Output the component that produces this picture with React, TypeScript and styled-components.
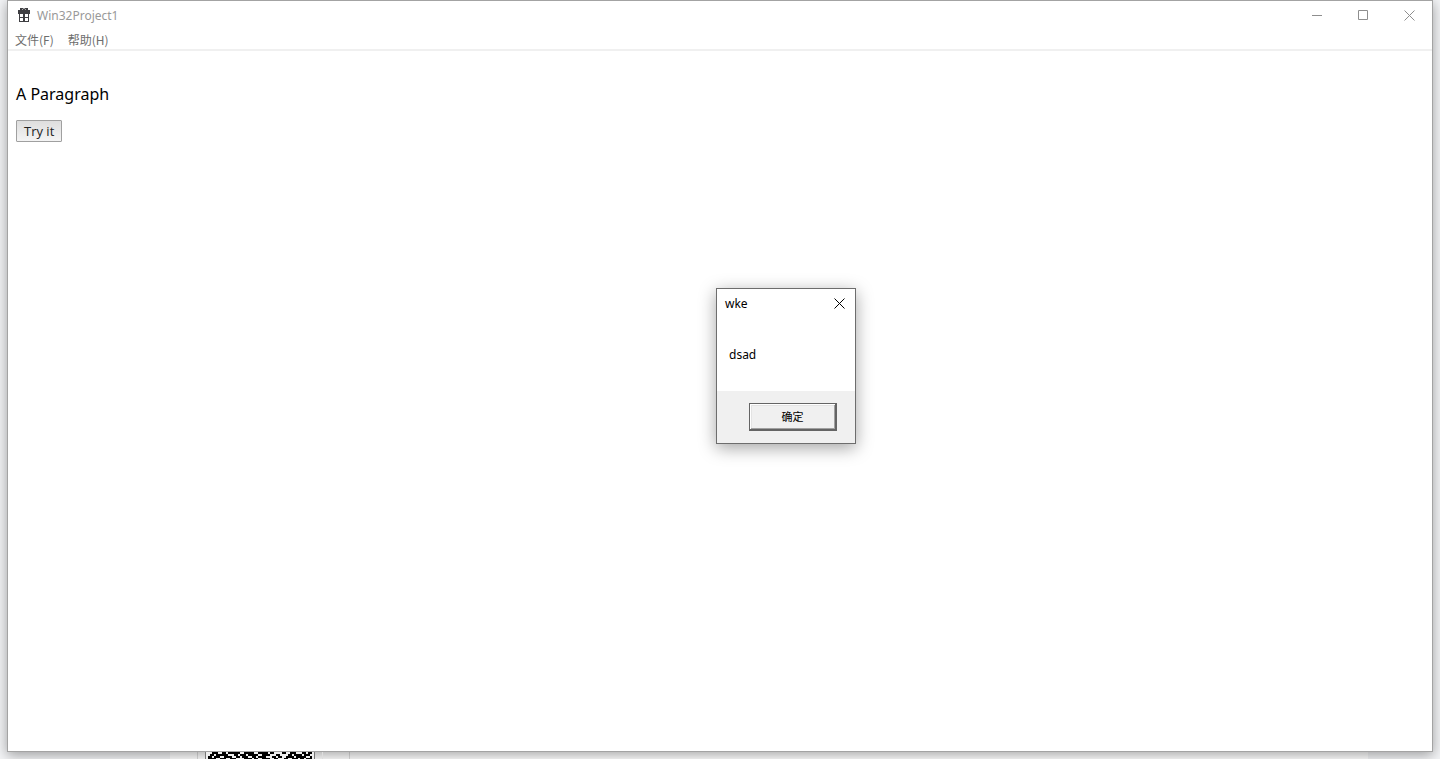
import React from 'react';
import styled, { createGlobalStyle } from 'styled-components';

const uiFont = '"Noto Sans", "Noto Sans CJK SC", sans-serif';

const GlobalStyle = createGlobalStyle`
  * { box-sizing: border-box; }
  body { margin: 0; background: #f3f4f6; font-family: ${uiFont}; }
  button { font-family: inherit; }
`;

const Desktop = styled.div`
  position: relative;
  display: flex;
  flex-direction: column;
  height: 100vh;
  overflow: hidden;
`;

const AppWindow = styled.section`
  position: relative;
  z-index: 1;
  flex: 1;
  display: flex;
  flex-direction: column;
  margin: 0 7px;
  background: #fff;
  border: 1px solid #a3a3a3;
  box-shadow: 0 3px 12px rgba(0, 0, 0, 0.36);
`;

const TitleBar = styled.header`
  display: flex;
  align-items: center;
  height: 28px;
  padding-left: 9px;
`;

const Title = styled.h1`
  flex: 1;
  margin: 0 0 0 6px;
  padding-top: 2px;
  font-size: 12px;
  font-weight: 400;
  line-height: 16px;
  color: #999;
`;

const CaptionButton = styled.button`
  display: flex;
  align-items: center;
  justify-content: center;
  width: 46px;
  height: 28px;
  padding: 0;
  border: 0;
  background: none;
  color: #8e8e8e;
`;

const MenuBar = styled.nav`
  display: flex;
  height: 22px;
  border-bottom: 2px solid #f0f0f0;
`;

const MenuButton = styled.button`
  padding: 2px 7px 0;
  border: 0;
  background: none;
  font-family: "Noto Sans CJK SC", sans-serif;
  font-size: 12px;
  line-height: 18px;
  color: #6d6d6d;
`;

const Page = styled.main`
  flex: 1;
  padding: 32px 8px;
`;

const Paragraph = styled.p`
  margin: 0 0 15px;
  font-size: 16px;
  line-height: 22px;
  color: #000;
`;

const TryButton = styled.button`
  display: block;
  height: 22px;
  padding: 0 7px;
  border: 1px solid #a0a0a0;
  border-radius: 1px;
  background: linear-gradient(#dedede, #f4f4f4);
  font-family: "Open Sans", sans-serif;
  font-size: 13px;
  line-height: 20px;
  color: #222;
`;

const Dialog = styled.div`
  position: absolute;
  z-index: 2;
  top: 288px;
  left: calc(50% - 4px);
  width: 140px;
  background: #fff;
  border: 1px solid #6d6d6d;
  box-shadow: 0 4px 16px rgba(0, 0, 0, 0.36);
  color: #000;
`;

const DialogHeader = styled.div`
  display: flex;
  align-items: center;
  justify-content: space-between;
  height: 28px;
  padding-left: 8px;
`;

const DialogTitle = styled.h2`
  margin: 0;
  padding-top: 2px;
  font-size: 12px;
  font-weight: 400;
  line-height: 16px;
`;

const DialogClose = styled.button`
  display: flex;
  align-items: center;
  justify-content: center;
  width: 31px;
  height: 28px;
  padding: 0;
  border: 0;
  background: none;
  color: #000;
`;

const Message = styled.p`
  margin: 0;
  padding: 30px 12px 28px;
  font-size: 12px;
  line-height: 16px;
`;

const DialogFooter = styled.div`
  display: flex;
  justify-content: flex-end;
  padding: 12px 18px;
  background: #f0f0f0;
`;

const OkButton = styled.button`
  width: 88px;
  height: 28px;
  padding: 0 0 2px;
  border: 1px solid #646464;
  border-right-width: 2px;
  border-bottom-width: 2px;
  background: #f0f0f0;
  box-shadow: inset 1px 1px #fff, inset -1px -1px #a0a0a0, inset 2px 2px #e3e3e3;
  font-family: "Noto Sans CJK SC", sans-serif;
  font-size: 11px;
  line-height: 16px;
  color: #000;
`;

const PageBehind = styled.div`
  flex: none;
  display: flex;
  height: 7px;
  margin: 0 72px 0 170px;
  background: #fff;
`;

const Column = styled.div<{ $width: number }>`
  width: ${(p) => p.$width}px;
  border-right: 1px solid #ddd;
`;

const CodeColumn = styled(Column)`
  position: relative;
  z-index: 2;
  padding-left: 7px;

  svg { display: block; }
`;

const codeRows = [
  '0011100110111111001111100111110110000110011100011011',
  '0110111111000110111011111001111000110000110111101110',
  '1101110011110011011100110111100011011001111011111001',
  '1111001110011100001111011001111001100011001110110111',
];

const codeCells = codeRows.flatMap((row, y) =>
  row.split('').map((cell, x) => (cell === '1' ? `M${x * 2 + 3} ${y * 2}h2v2h-2z` : '')),
).join('');

const CloseGlyph = () => (
  <svg width="11" height="11" viewBox="0 0 11 11" aria-hidden="true">
    <path d="M.5.5l10 10M10.5.5l-10 10" stroke="currentColor" />
  </svg>
);

const GiftGlyph = () => (
  <svg width="14" height="14" viewBox="0 0 14 14" aria-hidden="true">
    <path d="M3 0h3l1 1 1-1h3v2h2v4h-1v8H2V6H1V2h2z" fill="#3f3f43" />
    <path d="M5 1h1v1H5zM8 1h1v1H8z" fill="#aaa" />
    <path d="M3 6h3v3H3zM8 6h3v3H8zM3 10h3v3H3zM8 10h3v3H8z" fill="#fff" />
  </svg>
);

export default function App() {
  return (
    <>
      <GlobalStyle />
      <Desktop>
        <AppWindow>
          <TitleBar>
            <GiftGlyph />
            <Title>Win32Project1</Title>
            <CaptionButton aria-label="Minimize">
              <svg width="10" height="10" viewBox="0 0 10 10"><path d="M0 5.5h10" stroke="currentColor" /></svg>
            </CaptionButton>
            <CaptionButton aria-label="Maximize">
              <svg width="10" height="10" viewBox="0 0 10 10"><path d="M.5.5h9v9h-9z" fill="none" stroke="currentColor" /></svg>
            </CaptionButton>
            <CaptionButton aria-label="Close"><CloseGlyph /></CaptionButton>
          </TitleBar>
          <MenuBar>
            <MenuButton>文件(F)</MenuButton>
            <MenuButton>帮助(H)</MenuButton>
          </MenuBar>
          <Page>
            <Paragraph>A Paragraph</Paragraph>
            <TryButton>Try it</TryButton>
          </Page>
        </AppWindow>
        <PageBehind>
          <Column $width={28} />
          <CodeColumn $width={125}>
            <svg width="110" height="7" viewBox="0 0 110 7" aria-hidden="true">
              <path d="M0 0h110v7H0z" fill="#eee" />
              <path d="M.5 0v7M109.5 0v7" stroke="#777" />
              <path d={codeCells} fill="#000" />
            </svg>
          </CodeColumn>
          <Column $width={27} />
        </PageBehind>
        <Dialog role="dialog" aria-labelledby="dialog-title">
          <DialogHeader>
            <DialogTitle id="dialog-title">wke</DialogTitle>
            <DialogClose aria-label="Close"><CloseGlyph /></DialogClose>
          </DialogHeader>
          <Message>dsad</Message>
          <DialogFooter>
            <OkButton>确定</OkButton>
          </DialogFooter>
        </Dialog>
      </Desktop>
    </>
  );
}
